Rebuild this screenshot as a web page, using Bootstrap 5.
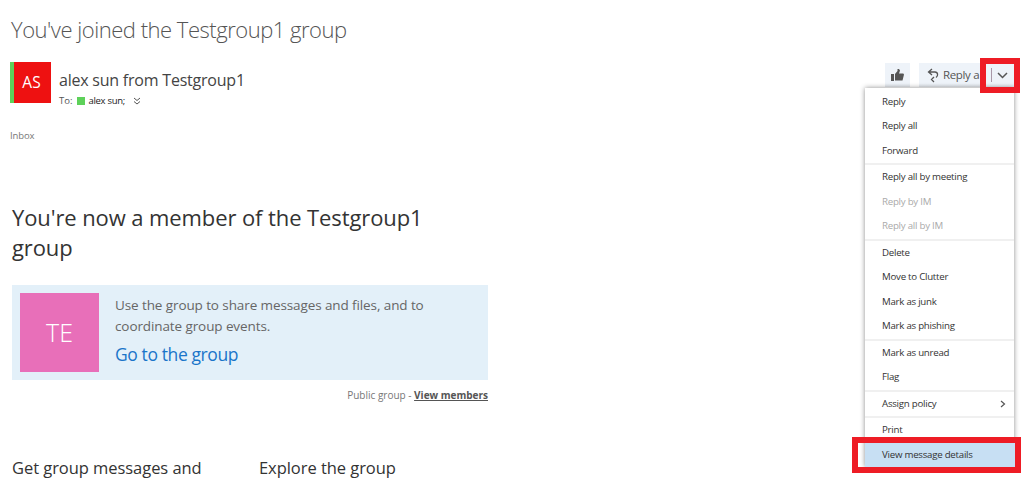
<!DOCTYPE html><html lang="en"><head>
  <meta charset="UTF-8">
  <title>You've joined the Testgroup1 group</title>
  <link href="https://cdn.jsdelivr.net/npm/bootstrap@5.3.0/dist/css/bootstrap.min.css" rel="stylesheet">
  <style>
    html, body { height: 483px; overflow: hidden; }
    body { background: #fff; font-family: "Open Sans", "Noto Sans", sans-serif; color: #333; position: relative; }
    .mail-wrap { padding: 14px 9px 0 10px; }
    .mail-subject { font-size: 22px; font-weight: 300; line-height: 30px; color: #555; margin: 0 0 18px 1px; letter-spacing: -.48px; }
    .sender-pic { width: 41px; height: 41px; background: #ee1111; border-left: 4px solid #5ed15a; color: #fff; font-size: 15.5px; padding-right: 2px; }
    .sender-name { font-size: 16px; line-height: 22px; color: #444; margin-top: 7px; letter-spacing: -.22px; }
    .sender-to { font-size: 9.5px; line-height: 12px; color: #555; margin-top: 4px; }
    .to-name { letter-spacing: -.3px; margin-left: -1px; color: #222; }
    .to-dot { width: 8px; height: 8px; background: #5ed15a; margin-left: 1px; }
    .act-row { margin-top: 1px; gap: 9px; }
    .act-btn { background: linear-gradient(#eef3f9 85%, #e3e7ec); height: 24px; color: #555; font-size: 11.5px; }
    .act-like { width: 25px; }
    .act-reply { width: 96px; padding-left: 8px; }
    .act-label { width: 40px; white-space: nowrap; margin-left: 4px; margin-right: 2px; letter-spacing: -.35px; }
    .act-divider { width: 1px; height: 14px; background: #a898a8; margin: 0 5px 0 6px; }
    .inbox-tag { font-size: 9.5px; color: #777; margin-top: 23px; line-height: 12px; letter-spacing: -.1px; }
    .body-head { font-size: 22px; line-height: 30px; color: #333; width: 430px; margin: 60px 0 23px 2px; font-weight: 400; letter-spacing: -.1px; }
    .group-box { width: 476px; height: 95px; margin-left: 2px; background: #e3f0f9; padding: 8px; }
    .group-pic { width: 79px; height: 79px; background: #e86fb9; color: #fff; font-size: 25px; font-weight: 300; }
    .group-txt { font-size: 13.5px; line-height: 21px; color: #666; width: 330px; letter-spacing: -.1px; padding-top: 2px; }
    .group-link { display: block; font-size: 17.5px; line-height: 28px; margin-top: 3px; color: #1a75c9; text-decoration: none; letter-spacing: -.4px; }
    .public-line { width: 476px; margin-left: 2px; font-size: 10px; line-height: 14px; color: #777; margin-top: 8px; }
    .public-line a { color: #555; font-weight: 700; }
    .sub-heads { font-size: 16.5px; line-height: 22px; color: #333; margin-top: 55px; margin-left: 2px; letter-spacing: -.05px; }
    .sub-first { width: 247px; }
    .more-menu { position: absolute; left: 865px; top: 88px; width: 149px; height: 379px; background: #fff; box-shadow: 0 0 5px rgba(0,0,0,.45); font-size: 9.7px; padding-top: 1.500px; z-index: 2; letter-spacing: -.25px; }
    .more-menu .dropdown-item { padding: 0 0 0 17px; height: 24.5px; line-height: 24.5px; color: #333; }
    .more-menu .dropdown-item.disabled { color: #aaa; }
    .more-menu .dropdown-item.picked { background: #c7dff3; height: 24px; line-height: 24px; width: 151px; }
    .more-menu .dropdown-divider { margin: 0; height: 2px; border-top: 2px solid #f0f0f0; opacity: 1; }
    .red-box { position: absolute; border: 6px solid #ee1c25; z-index: 3; }
    .red-top { left: 980px; top: 58px; width: 40px; height: 35px; }
    .red-bottom { left: 852px; top: 437px; width: 169px; height: 36px; }
  </style>
</head><body>
  <div class="mail-wrap">
    <h1 class="mail-subject">You've joined the Testgroup1 group</h1>
    <div class="d-flex">
      <div class="sender-pic d-flex align-items-center justify-content-center">AS</div>
      <div class="ms-2 flex-grow-1">
        <div class="sender-name">alex sun from Testgroup1</div>
        <div class="sender-to d-flex align-items-center gap-1">
          <span>To:</span><span class="to-dot"></span><span class="to-name">alex sun;</span>
          <svg class="ms-1" width="8" height="8" viewBox="0 0 8 8" fill="none" stroke="#555" stroke-width="1"><path d="M1 1l3 2.500L7 1M1 4.500l3 2.500 3-2.500"/></svg>
        </div>
      </div>
      <div class="act-row d-flex align-items-start">
        <div class="act-btn act-like d-flex align-items-center justify-content-center">
          <svg width="13" height="12" viewBox="0 0 13 12" fill="#555"><path d="M0 5h3v7H0zM4 5l2.500-3V0h1.500l1 1.500L8 4.500h4.300l.7 1-1.500 6H4z"/></svg>
        </div>
        <div class="act-btn act-reply d-flex align-items-center">
          <svg width="12" height="15" viewBox="0 0 12 15" fill="none" stroke="#555" stroke-width="1.300"><path d="M5 1L1.500 4 5 7M2 4h6c3 0 3.500 4 1 5.500M7 9l-2.500 2.500L7 14"/></svg>
          <span class="act-label">Reply a</span>
          <span class="act-divider flex-shrink-0"></span>
          <svg width="11" height="7" viewBox="0 0 11 7" fill="none" stroke="#555" stroke-width="1.500"><path d="M1 1l4.500 4.500L10 1"/></svg>
        </div>
      </div>
    </div>
    <div class="inbox-tag">Inbox</div>
    <h2 class="body-head">You're now a member of the Testgroup1 group</h2>
    <div class="group-box d-flex">
      <div class="group-pic d-flex align-items-center justify-content-center">TE</div>
      <div class="ms-3">
        <div class="group-txt">Use the group to share messages and files, and to coordinate group events.</div>
        <a class="group-link" href="#">Go to the group</a>
      </div>
    </div>
    <div class="public-line text-end">Public group - <a href="#">View members</a></div>
    <div class="sub-heads d-flex">
      <div class="sub-first">Get group messages and</div>
      <div>Explore the group</div>
    </div>
  </div>

  <div class="more-menu">
    <a class="dropdown-item" href="#">Reply</a>
    <a class="dropdown-item" href="#">Reply all</a>
    <a class="dropdown-item" href="#">Forward</a>
    <hr class="dropdown-divider">
    <a class="dropdown-item" href="#">Reply all by meeting</a>
    <a class="dropdown-item disabled" href="#">Reply by IM</a>
    <a class="dropdown-item disabled" href="#">Reply all by IM</a>
    <hr class="dropdown-divider">
    <a class="dropdown-item" href="#">Delete</a>
    <a class="dropdown-item" href="#">Move to Clutter</a>
    <a class="dropdown-item" href="#">Mark as junk</a>
    <a class="dropdown-item" href="#">Mark as phishing</a>
    <hr class="dropdown-divider">
    <a class="dropdown-item" href="#">Mark as unread</a>
    <a class="dropdown-item" href="#">Flag</a>
    <hr class="dropdown-divider">
    <a class="dropdown-item d-flex justify-content-between align-items-center pe-2" href="#">Assign policy
      <svg width="6" height="8" viewBox="0 0 6 8" fill="none" stroke="#555" stroke-width="1.200"><path d="M1 1l3.500 3L1 7"/></svg></a>
    <hr class="dropdown-divider">
    <a class="dropdown-item" href="#">Print</a>
    <a class="dropdown-item picked" href="#">View message details</a>
  </div>

  <div class="red-box red-top"></div>
  <div class="red-box red-bottom"></div>
</body></html>
